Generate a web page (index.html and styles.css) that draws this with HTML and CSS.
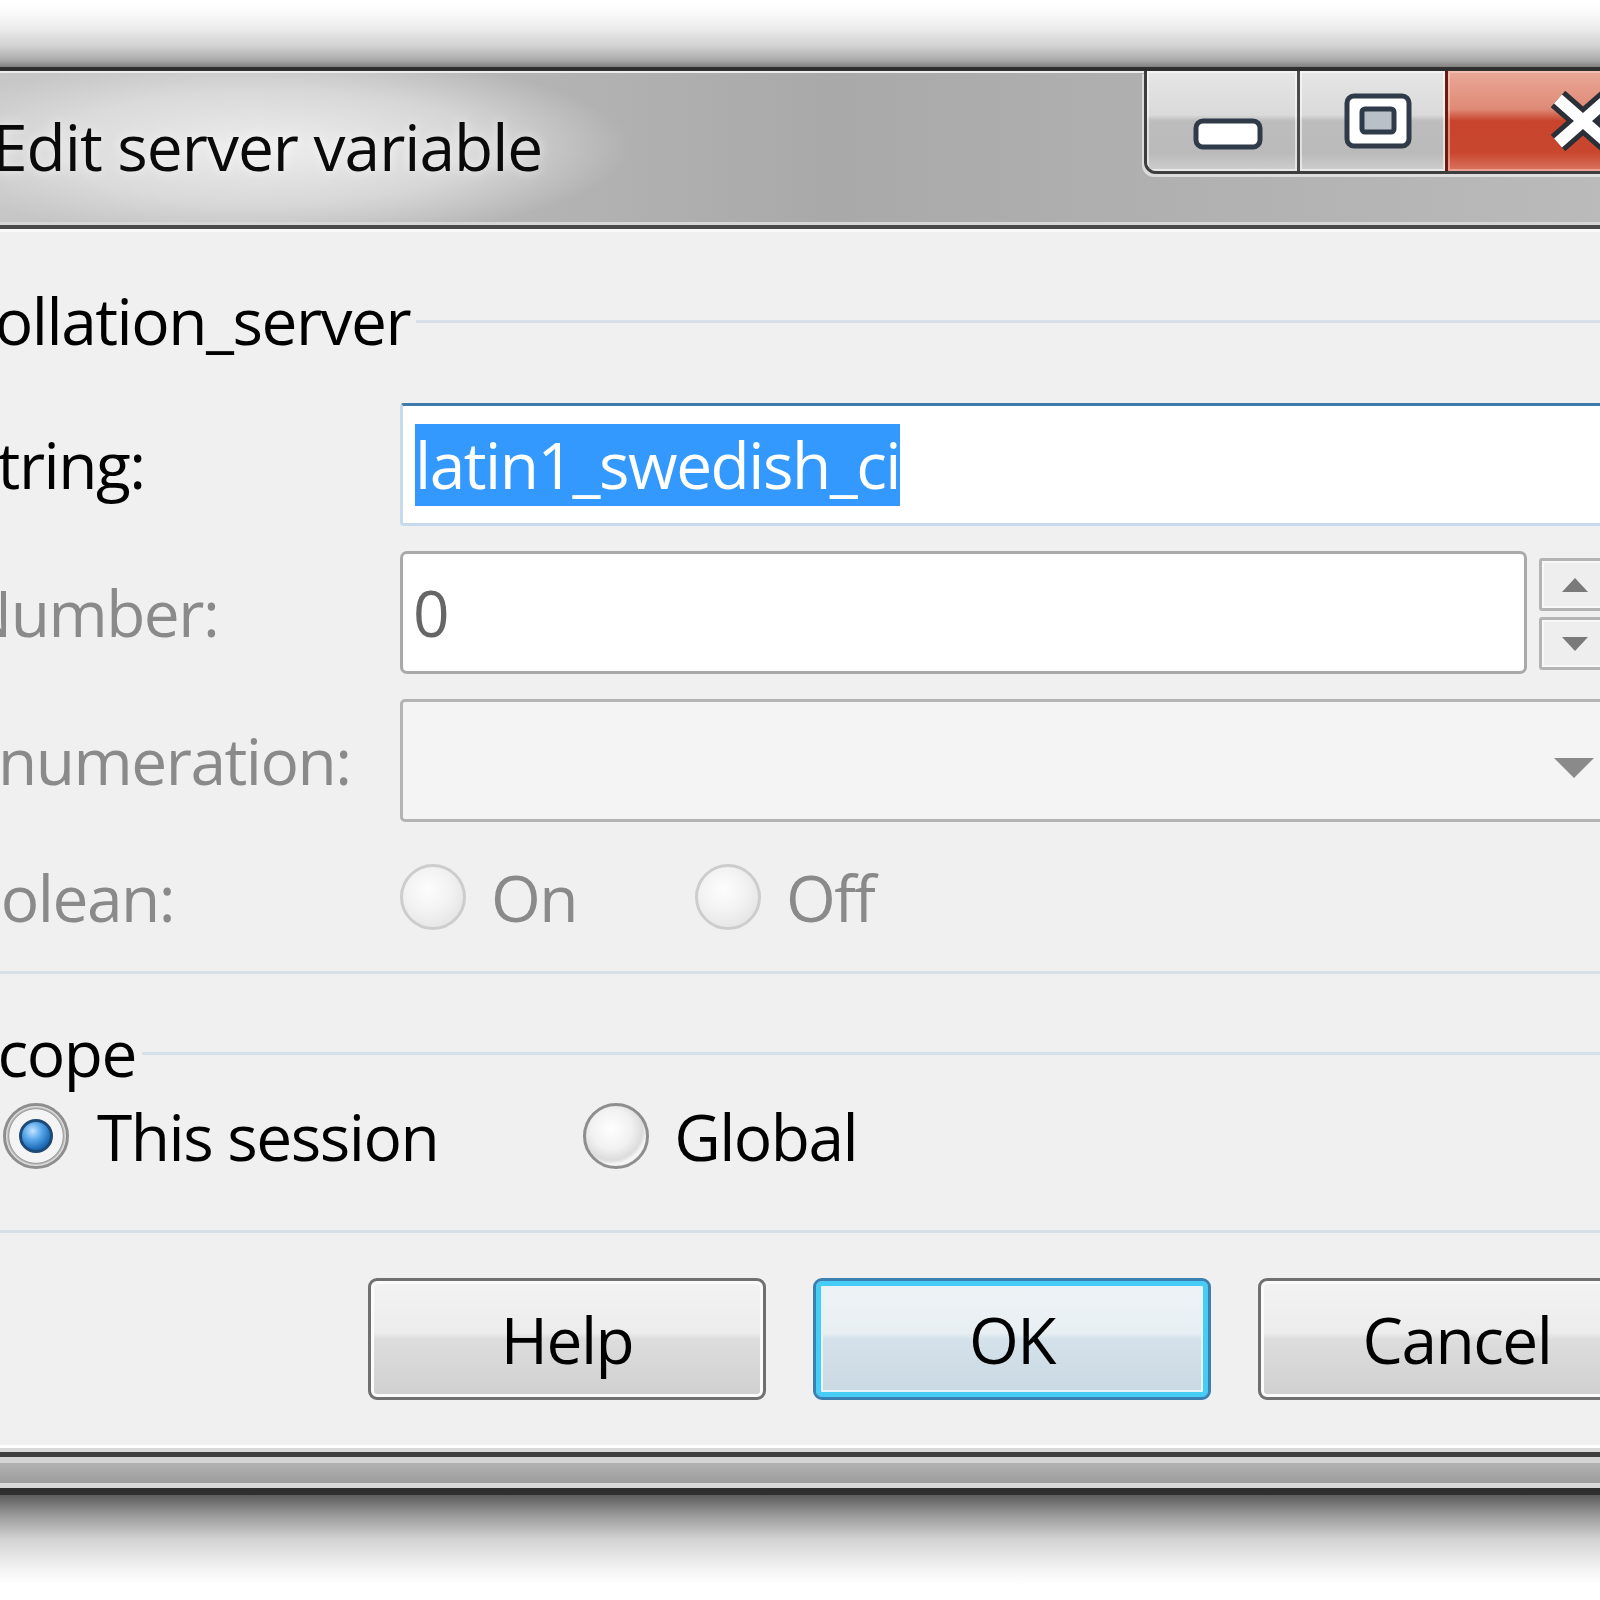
FILE: index.html
```html
<!DOCTYPE html>
<html lang="en">
	<head>
		<meta charset="utf-8" />
		<title>Edit server variable</title>
		<link rel="stylesheet" href="styles.css">
	</head>
	<body>
		<div class="screen">
			<div class="shadow-top"></div>
			<div class="window">
				<div class="titlebar">
					<span class="title">Edit server variable</span>
					<div class="caption-buttons">
						<span class="cap-btn cap-min">
							<svg width="72" height="34" viewBox="0 0 72 34"><rect x="4" y="4" width="64" height="26" rx="7" fill="#fff" stroke="#2f3b48" stroke-width="5"/></svg>
						</span>
						<span class="cap-btn cap-max">
							<svg width="70" height="58" viewBox="0 0 70 58"><rect x="4" y="4" width="62" height="50" rx="7" fill="#fff" stroke="#2f3b48" stroke-width="5"/><rect x="19" y="17" width="32" height="23" rx="3" fill="#b9c0c8" stroke="#2f3b48" stroke-width="5"/></svg>
						</span>
						<span class="cap-btn cap-close">
							<svg width="74" height="60" viewBox="0 0 74 60"><path d="M12 8 L62 52 M62 8 L12 52" stroke="#2b3038" stroke-width="22"/><path d="M12 8 L62 52 M62 8 L12 52" stroke="#fff" stroke-width="12"/></svg>
						</span>
					</div>
				</div>

				<div class="client">
					<fieldset class="group">
						<legend class="legend-shifted">Collation_server</legend>
						<div class="field-rows">
							<div class="field-row">
								<label class="field-label">String:</label>
								<div class="textbox textbox-focused"><span class="selection">latin1_swedish_ci</span></div>
							</div>
							<div class="field-row">
								<label class="field-label disabled">Number:</label>
								<div class="number-field">
									<div class="textbox textbox-number">0</div>
									<div class="spin">
										<span class="spin-btn"><svg width="30" height="16" viewBox="0 0 30 16"><path d="M15 1 L28 15 L2 15 Z" fill="#7a7a7a"/></svg></span>
										<span class="spin-btn"><svg width="30" height="16" viewBox="0 0 30 16"><path d="M2 1 L28 1 L15 15 Z" fill="#7a7a7a"/></svg></span>
									</div>
								</div>
							</div>
							<div class="field-row">
								<label class="field-label disabled">Enumeration:</label>
								<div class="combo">
									<svg width="42" height="22" viewBox="0 0 42 22"><path d="M1 1 L41 1 L21 21 Z" fill="#8a8a8a"/></svg>
								</div>
							</div>
							<div class="field-row field-row-short">
								<label class="field-label field-label-wide disabled">Boolean:</label>
								<div class="radio-group">
									<span class="radio-option radio-option-on"><span class="radio radio-disabled"></span><span class="disabled">On</span></span>
									<span class="radio-option"><span class="radio radio-disabled"></span><span class="disabled">Off</span></span>
								</div>
							</div>
						</div>
					</fieldset>

					<fieldset class="group group-scope">
						<legend>Scope</legend>
						<div class="scope-options">
							<span class="radio-option radio-option-session"><span class="radio radio-checked"></span><span>This session</span></span>
							<span class="radio-option"><span class="radio"></span><span>Global</span></span>
						</div>
					</fieldset>

					<div class="buttons">
						<span class="btn">Help</span>
						<span class="btn btn-default">OK</span>
						<span class="btn">Cancel</span>
					</div>
				</div>
				<div class="frame-bottom"></div>
			</div>
			<div class="shadow-bottom"></div>
		</div>
	</body>
</html>
```

FILE: styles.css
```css
html, body {
	margin: 0;
	padding: 0;
	background-color: #fff;
}
.screen {
	width: 1600px;
	height: 1600px;
	overflow: hidden;
	display: flex;
	flex-direction: column;
	background-color: #fff;
}
.shadow-top {
	flex: none;
	height: 67px;
	background: linear-gradient(#fff 0, #fbfbfb 12px, #ececec 28px, #d2d2d2 46px, #ababab 60px, #808080 67px);
}
.window {
	flex: none;
	width: 1780px;
	margin-left: -60px;
	font-family: "Open Sans", "Noto Sans", sans-serif;
	font-size: 64px;
	letter-spacing: -1.5px;
	color: #000;
}

/* title bar */
.titlebar {
	display: flex;
	align-items: flex-start;
	height: 154px;
	border-top: 4px solid #2f2f2f;
	border-bottom: 4px solid #4a4a4a;
	box-shadow: inset 0 2px 0 #ececec, inset 0 -3px 0 #d6d6d6;
	background:
		radial-gradient(ellipse 360px 95px at 330px 76px, rgba(240, 240, 240, 0.95) 0, rgba(234, 234, 234, 0.6) 60%, rgba(232, 232, 232, 0) 100%),
		linear-gradient(to right, #c9c9c9 0, #b6b6b6 30%, #a9a9a9 50%, #afafaf 66%, #bdbdbd 100%);
}
.title {
	padding: 32px 0 0 52px;
	line-height: 87px;
	color: #0a0a0a;
	letter-spacing: -1px;
	text-shadow: 0 0 12px rgba(255, 255, 255, 0.8);
}
.caption-buttons {
	display: flex;
	margin-left: auto;
	margin-right: 16px;
	height: 100px;
	border: 3px solid #3e3e3e;
	border-top: 0;
	border-bottom-left-radius: 12px;
	overflow: hidden;
	box-shadow: -2px 3px 0 rgba(255, 255, 255, 0.55);
}
.cap-btn {
	display: flex;
	align-items: center;
	justify-content: center;
	box-sizing: border-box;
	box-shadow: inset 0 0 0 2px rgba(255, 255, 255, 0.55);
}
.cap-min {
	width: 150px;
	padding: 26px 0 0 12px;
	background: linear-gradient(#e6e6e6 0, #dadada 44%, #bdbdbd 50%, #bababa 82%, #cfcfcf 100%);
}
.cap-max {
	width: 148px;
	padding-left: 10px;
	border-left: 3px solid #4a4a4a;
	background: linear-gradient(#e6e6e6 0, #dadada 44%, #bdbdbd 50%, #bababa 82%, #cfcfcf 100%);
}
.cap-close {
	width: 256px;
	padding-left: 16px;
	border-left: 3px solid #6b1a0e;
	background: linear-gradient(#eaa898 0, #df8a76 38%, #c8442c 50%, #c9472f 82%, #da7561 100%);
	box-shadow: inset 0 0 0 2px rgba(255, 220, 210, 0.45);
}

/* client area */
.client {
	border-top: 3px solid #fafafa;
	border-bottom: 3px solid #fff;
	padding: 49px 61px 45px 14px;
	background-color: #f0f0f0;
}
.group {
	margin: 0;
	min-inline-size: 0;
	padding: 42px 0 24px 7px;
	border: 3px solid #d7e0e6;
}
.group legend {
	padding: 0 6px 0 0;
	line-height: 80px;
}
.group .legend-shifted {
	margin-left: -8px;
}
.group-scope {
	margin-top: 39px;
	padding-top: 10px;
	padding-bottom: 61px;
}
.field-rows {
	display: flex;
	flex-direction: column;
	gap: 25px;
}
.field-row {
	display: grid;
	grid-template-columns: 436px 1fr;
	align-items: center;
	height: 123px;
}
.field-row-short {
	height: 100px;
}
.field-label-wide {
	margin-left: -40px;
}
.disabled {
	color: #8a8a8a;
}

.textbox {
	box-sizing: border-box;
	height: 123px;
	display: flex;
	align-items: center;
	padding-left: 12px;
	border: 3px solid #abadb3;
	border-radius: 4px;
	background-color: #fff;
}
.textbox-focused {
	border-color: #c5daed;
	border-top-color: #3d7bad;
}
.selection {
	display: inline-block;
	height: 82px;
	line-height: 82px;
	background-color: #3399ff;
	color: #fff;
}
.number-field {
	display: flex;
	gap: 12px;
	height: 123px;
}
.textbox-number {
	flex: 1;
	padding-left: 10px;
	color: #666;
	border-color: #a9a9a9;
	border-radius: 7px;
}
.spin {
	width: 117px;
	display: flex;
	flex-direction: column;
	gap: 6px;
	padding: 7px 0 4px;
	box-sizing: border-box;
}
.spin-btn {
	flex: 1;
	display: flex;
	align-items: center;
	padding-left: 18px;
	border: 3px solid #b4b4b4;
	border-radius: 3px;
	background-color: #eeeeee;
	box-shadow: inset 0 0 0 2px #f8f8f8;
}
.combo {
	box-sizing: border-box;
	height: 123px;
	display: flex;
	align-items: center;
	justify-content: flex-end;
	padding: 14px 58px 0 0;
	border: 3px solid #b4b4b4;
	border-radius: 5px;
	background-color: #f4f4f4;
}

/* radio buttons */
.radio-group, .scope-options {
	display: flex;
	align-items: center;
}
.scope-options {
	height: 66px;
	margin-left: 39px;
}
.radio-option {
	display: flex;
	align-items: center;
	gap: 25px;
}
.radio-option-on {
	margin-right: 118px;
}
.radio-option-session {
	gap: 28px;
	margin-right: 145px;
}
.radio {
	position: relative;
	box-sizing: border-box;
	width: 66px;
	height: 66px;
	border-radius: 50%;
	border: 3px solid #8e8e8e;
	background: radial-gradient(circle at 42% 38%, #ffffff 0, #f1f1f1 40%, #dcdcdc 62%, #f6f6f6 70%, #d6d6d6 100%);
}
.radio-disabled {
	border-color: #cdcdcd;
	background: radial-gradient(circle at 42% 38%, #fdfdfd 0, #f2f2f2 45%, #e6e6e6 75%, #eeeeee 100%);
}
.radio-checked {
	background: radial-gradient(circle, #f4f4f4 0, #f4f4f4 62%, #9a9a9a 64%, #e8e8e8 70%, #d8d8d8 100%);
}
.radio-checked::after {
	content: "";
	position: absolute;
	left: 13px;
	top: 13px;
	width: 34px;
	height: 34px;
	border-radius: 50%;
	box-sizing: border-box;
	border: 3px solid #1c4a75;
	background: radial-gradient(circle at 38% 32%, #c4e4ff 0, #5aa8ea 35%, #1f6cb8 70%, #124a86 100%);
}

/* dialog buttons */
.buttons {
	display: flex;
	justify-content: flex-end;
	gap: 47px;
	margin-top: 45px;
	padding-right: 3px;
}
.btn {
	box-sizing: border-box;
	width: 398px;
	height: 122px;
	display: flex;
	align-items: center;
	justify-content: center;
	border: 3px solid #707070;
	border-radius: 9px;
	box-shadow: inset 0 0 0 3px #fbfbfb;
	background: linear-gradient(#f3f3f3 0, #ececec 45%, #dddddd 50%, #d0d0d0 100%);
}
.btn-default {
	border-color: #3c7fb1;
	box-shadow: inset 0 0 0 5px #45cdf6, inset 0 0 0 7px #e8f2f8;
	background: linear-gradient(#eef3f6 0, #e8eff3 45%, #d4e1ea 50%, #c9d8e2 100%);
}

/* window frame bottom */
.frame-bottom {
	height: 47px;
	background: linear-gradient(#d8d8d8 0, #d8d8d8 4px, #3e3e3e 4px, #3e3e3e 9px, #d4d4d4 9px, #d4d4d4 15px, #b2b2b2 15px, #9d9d9d 35px, #d8d8d8 35px, #d8d8d8 40px, #2e2e2e 40px, #2e2e2e 47px);
}
.shadow-bottom {
	flex: 1;
	background: linear-gradient(#5c5c5c 0, #999 20px, #d4d4d4 45px, #f4f4f4 75px, #fff 90px);
}
```
